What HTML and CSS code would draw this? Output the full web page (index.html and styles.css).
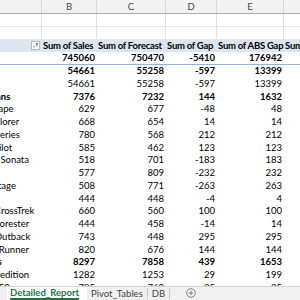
FILE: index.html
```html
<!DOCTYPE html>
<html lang="en">
<head>
  <meta charset="UTF-8" />
  <title>Detailed_Report</title>
  <link rel="stylesheet" href="styles.css">
</head>
<body>
  <div class="window">
    <div class="sheet">
      <div class="row colhead">
        <div></div><div>B</div><div>C</div><div>D</div><div>E</div><div>F</div>
      </div>
      <div class="row blank"><div></div><div></div><div></div><div></div><div></div><div></div></div>
      <div class="row blank"><div></div><div></div><div></div><div></div><div></div><div></div></div>

      <div class="row pvhead">
        <div class="lab"><span class="lv0">Row Labels</span><span class="filter"><svg width="9" height="9" viewBox="0 0 9 9"><rect x="0.5" y="0.5" width="8" height="8" fill="#fff" stroke="#b7b7b7"/><path d="M2 5.5h2.2l-1.1 1.3z" fill="#555"/><path d="M4.3 2.3h3.2l-1.2 1.5v2.2l-0.8-0.5v-1.7z" fill="#555"/></svg></span></div>
        <div>Sum of Sales</div><div>Sum of Forecast</div><div>Sum of Gap</div><div>Sum of ABS Gap</div><div>Sum of Sales Gap %</div>
      </div>

      <div class="row total">
        <div class="lab"><span class="lv0">All Dealers</span></div>
        <div class="num">745060</div><div class="num">750470</div><div class="num">-5410</div><div class="num">176942</div><div></div>
      </div>
      <div class="row strong">
        <div class="lab"><span class="lv1">East</span></div>
        <div class="num">54661</div><div class="num">55258</div><div class="num">-597</div><div class="num">13399</div><div></div>
      </div>
      <div class="row">
        <div class="lab"><span class="lv2">Boston</span></div>
        <div class="num">54661</div><div class="num">55258</div><div class="num">-597</div><div class="num">13399</div><div></div>
      </div>
      <div class="row strong">
        <div class="lab"><span class="lv3">Sedans &amp; Vans</span></div>
        <div class="num">7376</div><div class="num">7232</div><div class="num">144</div><div class="num">1632</div><div></div>
      </div>
      <div class="row">
        <div class="lab"><span class="lv4">Ford Escape</span></div>
        <div class="num">629</div><div class="num">677</div><div class="num">-48</div><div class="num">48</div><div></div>
      </div>
      <div class="row">
        <div class="lab"><span class="lv4">Ford Explorer</span></div>
        <div class="num">668</div><div class="num">654</div><div class="num">14</div><div class="num">14</div><div></div>
      </div>
      <div class="row">
        <div class="lab"><span class="lv4">BMW i Series</span></div>
        <div class="num">780</div><div class="num">568</div><div class="num">212</div><div class="num">212</div><div></div>
      </div>
      <div class="row">
        <div class="lab"><span class="lv4">Honda Pilot</span></div>
        <div class="num">585</div><div class="num">462</div><div class="num">123</div><div class="num">123</div><div></div>
      </div>
      <div class="row">
        <div class="lab"><span class="lv4">Hyundai Sonata</span></div>
        <div class="num">518</div><div class="num">701</div><div class="num">-183</div><div class="num">183</div><div></div>
      </div>
      <div class="row">
        <div class="lab"><span class="lv4">Kia Rio</span></div>
        <div class="num">577</div><div class="num">809</div><div class="num">-232</div><div class="num">232</div><div></div>
      </div>
      <div class="row">
        <div class="lab"><span class="lv4">Kia Sportage</span></div>
        <div class="num">508</div><div class="num">771</div><div class="num">-263</div><div class="num">263</div><div></div>
      </div>
      <div class="row">
        <div class="lab"><span class="lv4">Mazda 3</span></div>
        <div class="num">444</div><div class="num">448</div><div class="num">-4</div><div class="num">4</div><div></div>
      </div>
      <div class="row">
        <div class="lab"><span class="lv4">Subaru CrossTrek</span></div>
        <div class="num">660</div><div class="num">560</div><div class="num">100</div><div class="num">100</div><div></div>
      </div>
      <div class="row">
        <div class="lab"><span class="lv4">Subaru Forester</span></div>
        <div class="num">444</div><div class="num">458</div><div class="num">-14</div><div class="num">14</div><div></div>
      </div>
      <div class="row">
        <div class="lab"><span class="lv4">Subaru Outback</span></div>
        <div class="num">743</div><div class="num">448</div><div class="num">295</div><div class="num">295</div><div></div>
      </div>
      <div class="row">
        <div class="lab"><span class="lv4">Toyota 4Runner</span></div>
        <div class="num">820</div><div class="num">676</div><div class="num">144</div><div class="num">144</div><div></div>
      </div>
      <div class="row strong">
        <div class="lab"><span class="lv3">Large Trucks</span></div>
        <div class="num">8297</div><div class="num">7858</div><div class="num">439</div><div class="num">1653</div><div></div>
      </div>
      <div class="row">
        <div class="lab"><span class="lv4">Ford Expedition</span></div>
        <div class="num">1282</div><div class="num">1253</div><div class="num">29</div><div class="num">199</div><div></div>
      </div>
      <div class="row">
        <div class="lab"><span class="lv4">Ford F-150</span></div>
        <div class="num">795</div><div class="num">760</div><div class="num">35</div><div class="num">35</div><div></div>
      </div>
    </div>

    <div class="tabs">
      <div class="tab active"><span>Detailed_Report</span></div>
      <div class="tab">Pivot_Tables</div>
      <div class="tab">DB</div>
      <div class="add">
        <svg width="10" height="10" viewBox="0 0 10 10"><circle cx="5" cy="5" r="4.3" fill="none" stroke="#777" stroke-width="0.9"/><path d="M5 2.8v4.4M2.8 5h4.4" stroke="#777" stroke-width="0.9"/></svg>
      </div>
    </div>
  </div>
</body>
</html>
```

FILE: styles.css
```css
* {
  box-sizing: border-box;
}

html, body {
  margin: 0;
  background: #fff;
}

body {
  font-family: Lato, "Liberation Sans", sans-serif;
  font-size: 9.5px;
  color: #000;
}

.window {
  width: 300px;
  height: 300px;
  display: flex;
  flex-direction: column;
  overflow: hidden;
}

.sheet {
  flex: 1;
  overflow: hidden;
}

.row {
  display: grid;
  grid-template-columns: 42px 55px 69px 51px 67px 90px;
  height: 12.75px;
  line-height: 12.75px;
  white-space: nowrap;
}

.row > div {
  overflow: hidden;
}

.colhead {
  height: 14px;
  line-height: 13px;
  background: #f3f3f3;
  border-bottom: 1px solid #ababab;
  color: #444;
  text-align: center;
}

.colhead > div {
  border-right: 1px solid #d9d9d9;
}

.blank > div {
  border-right: 1px solid #e1e1e1;
  border-bottom: 1px solid #e6e6e6;
}

.pvhead {
  background: #dce6f1;
  font-weight: bold;
  letter-spacing: -0.25px;
}

.pvhead > div {
  padding-left: 1px;
}

.total {
  font-weight: bold;
  border-bottom: 1px solid #95b3d7;
}

.strong {
  font-weight: bold;
}

.num {
  text-align: right;
  padding-right: 2px;
}

/* row labels: column A is scrolled, only the tail of each label shows */
.lab {
  position: relative;
}

.lab span {
  display: inline-block;
}

.lv0 { margin-left: -80px; }
.lv1 { margin-left: -74px; }
.lv2 { margin-left: -68px; }
.lv3 { margin-left: -51px; }
.lv4 { margin-left: -37px; }

.filter {
  position: absolute;
  right: 2px;
  top: 1px;
  height: 9px;
  line-height: 0;
  letter-spacing: 0;
}

/* sheet tabs */
.tabs {
  flex: none;
  height: 14px;
  display: flex;
  background: #f0f0f0;
  border-top: 1px solid #d4d4d4;
  color: #444;
  line-height: 12px;
  white-space: nowrap;
}

.tab {
  padding: 0 4px;
  border-right: 1px solid #c8c8c8;
  margin: 1px 0;
}

.tab.active {
  margin: 0 0 0 7px;
  padding: 0 8px 0 3px;
  background: #fff;
  color: #217346;
  font-weight: bold;
  border-right: none;
}

.tab.active span {
  display: inline-block;
  line-height: 11px;
  border-bottom: 2px solid #217346;
}

.add {
  margin-left: 16px;
  padding-top: 1px;
  line-height: 0;
}
```
